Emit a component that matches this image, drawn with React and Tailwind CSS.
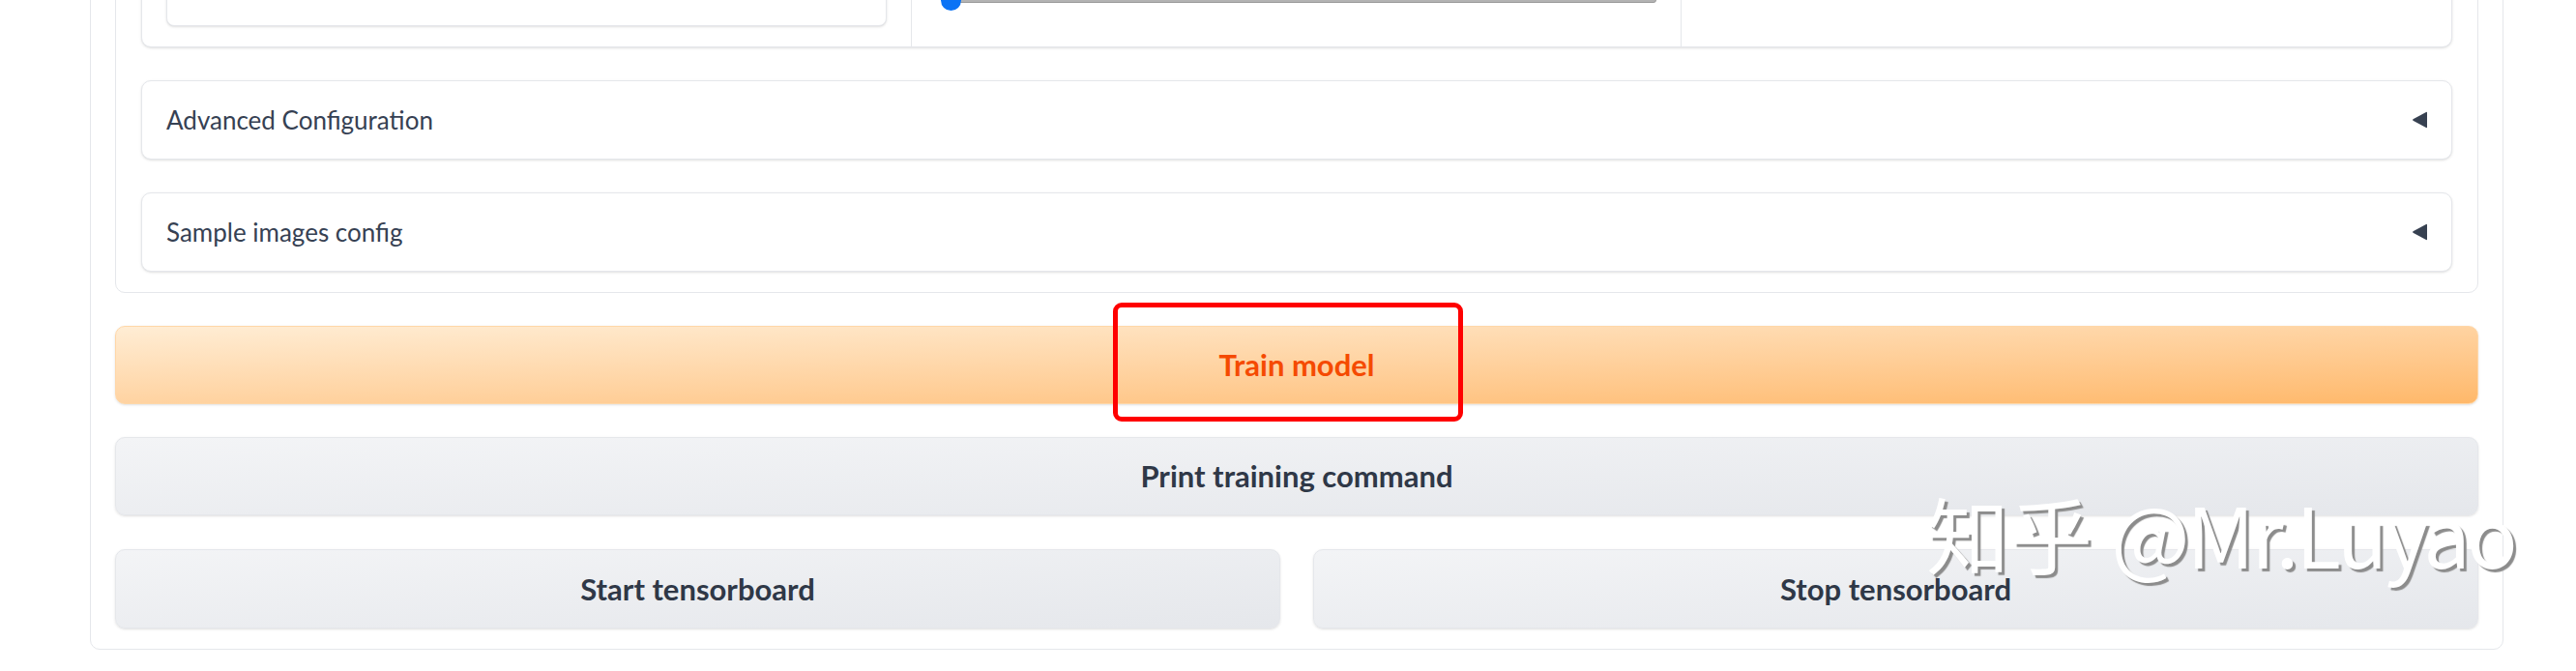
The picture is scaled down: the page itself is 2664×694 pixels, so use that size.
import React from 'react';

const Caret = () => (
  <svg width="17" height="18" viewBox="0 0 17 18" className="shrink-0">
    <path d="M16 1.5 L16 16.5 Q16 17.5 15 17 L1.5 9.8 Q0.6 9 1.5 8.2 L15 1 Q16 0.5 16 1.5 Z" fill="#374151" />
  </svg>
);

const Accordion = ({ label }) => (
  <div className="h-[82px] flex items-center justify-between pl-[25px] pr-[24px] bg-white border border-gray-200 rounded-[10px] shadow-sm">
    <span className="text-[26px] text-gray-700">{label}</span>
    <Caret />
  </div>
);

const SecondaryButton = ({ children, className = '' }) => (
  <button className={`flex items-center justify-center bg-gradient-to-br from-gray-100 to-gray-200 border border-gray-200 rounded-[10px] shadow-sm text-[31px] font-bold text-[#2f3847] ${className}`}>
    {children}
  </button>
);

export default function App() {
  return (
    <div className="relative h-[694px] w-[2664px] overflow-hidden bg-white font-['Lato','Liberation_Sans',sans-serif]">
      <div className="-mt-[140px] ml-[93px] w-[2496px] border border-gray-200 rounded-[10px] px-[25px] pt-[25px] pb-[21px] flex flex-col gap-[34px]">
        {/* form group */}
        <div className="border border-gray-200 rounded-[10px] px-[26px] pt-[26px] pb-[21px] flex flex-col gap-[34px]">
          <div className="h-[136px] grid grid-cols-3 divide-x divide-gray-200 border border-gray-200 rounded-[10px] bg-white shadow-sm">
            <div className="flex flex-col justify-end px-[25px] pb-[21px]">
              <div className="h-[80px] border border-gray-200 rounded-[8px] bg-white shadow-sm" />
            </div>
            <div className="flex flex-col justify-end pl-[33px] pr-[25px] pb-[38px]">
              <div className="relative h-[20px] flex items-center">
                <div className="w-full h-[6px] rounded-full bg-[#b3b3b3] border border-[#9a9a9a]" />
                <div className="absolute left-[-3px] top-0 w-[21px] h-[21px] rounded-full bg-[#0b73f5]" />
              </div>
            </div>
            <div />
          </div>
          <Accordion label="Advanced Configuration" />
          <Accordion label="Sample images config" />
        </div>

        <button className="h-[81px] flex items-center justify-center bg-gradient-to-br from-orange-100 to-orange-300 border border-orange-200 rounded-[10px] shadow-sm text-[31px] font-bold text-orange-600">
          Train model
        </button>

        <SecondaryButton className="h-[81px]">Print training command</SecondaryButton>

        <div className="grid grid-cols-2 gap-[34px] mt-[1px]">
          <SecondaryButton className="h-[82px]">Start tensorboard</SecondaryButton>
          <SecondaryButton className="h-[82px]">Stop tensorboard</SecondaryButton>
        </div>
      </div>

      {/* annotation box */}
      <div className="absolute left-[1151px] top-[313px] w-[362px] h-[123px] border-[5px] border-[#f00] rounded-[9px]" />

      {/* watermark */}
      <div className="absolute left-[1992px] top-[508px] text-[86px] leading-none text-white whitespace-nowrap font-['Noto_Sans_CJK_SC',sans-serif] [text-shadow:3px_3px_1px_#8c8c8c]">
        知乎 <span className="tracking-[-3px]">@Mr.Luyao</span>
      </div>
    </div>
  );
}
